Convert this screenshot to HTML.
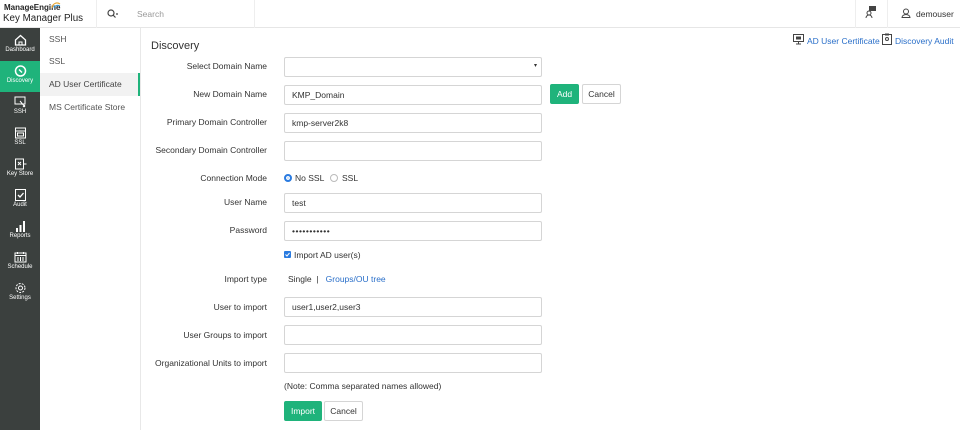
<!DOCTYPE html>
<html><head><meta charset="utf-8"><style>
*{margin:0;padding:0;box-sizing:border-box}
body{width:960px;height:430px;overflow:hidden;background:#fff;font-family:"Liberation Sans",sans-serif;font-size:8.5px;color:#333;position:relative}
.a{position:absolute;white-space:nowrap}
.hdr{position:absolute;left:0;top:0;width:960px;height:28px;border-bottom:1px solid #e6e6e6;background:#fff}
.side{position:absolute;left:0;top:28px;width:40px;height:402px;background:#3b403e}
.si{position:absolute;left:0;width:40px;height:31px;color:#fff;font-size:6px;text-align:center}
.si svg{display:block;margin:4px auto 1px}
.sub{position:absolute;left:40px;top:28px;width:101px;height:402px;background:#fff;border-right:1px solid #e8e8e8}
.sub div{position:absolute;left:0;width:100px;height:23px;line-height:23px;padding-left:9px;font-size:8.5px;color:#555}
.lbl{position:absolute;width:200px;left:67px;text-align:right;font-size:8.5px;color:#333}
.in{position:absolute;left:284px;width:258px;height:20px;border:1px solid #d5d5d5;border-radius:2px;padding-left:7px;line-height:18px;font-size:8.5px;color:#333}
.btn{position:absolute;height:20px;border-radius:2px;font-size:8.5px;line-height:18px;text-align:center}
.g{background:#1fb37b;color:#fff;border:1px solid #1fb37b}
.w{background:#fff;color:#333;border:1px solid #d5d5d5}
a{color:#2a6fc9}
</style></head><body>
<div class="hdr">
 <div class="a" style="left:4px;top:3px;font-size:8px;font-weight:bold;color:#222">ManageEngine</div>
 <svg class="a" style="left:51px;top:1px" width="10" height="8"><path d="M1 7 A5 5 0 0 1 9 3" stroke="#e8a32a" fill="none" stroke-width="1"/><path d="M3 7 A4 4 0 0 1 9 5" stroke="#3aa0dd" fill="none" stroke-width="1"/></svg>
 <div class="a" style="left:3px;top:13px;font-size:9.8px;color:#222">Key Manager Plus</div>
 <div class="a" style="left:96px;top:0;width:1px;height:28px;background:#eee"></div>
 <svg class="a" style="left:107px;top:9px" width="12" height="10"><circle cx="4" cy="4" r="3" stroke="#444" fill="none" stroke-width="1.2"/><path d="M6 6l2.5 2.5M9 5h2" stroke="#444" stroke-width="1.2"/></svg>
 <div class="a" style="left:137px;top:9px;color:#999;font-size:8.5px">Search</div>
 <div class="a" style="left:254px;top:0;width:1px;height:28px;background:#eee"></div>
 <div class="a" style="left:855px;top:0;width:1px;height:28px;background:#eee"></div>
 <div class="a" style="left:887px;top:0;width:1px;height:28px;background:#eee"></div>
 <svg class="a" style="left:865px;top:6px" width="12" height="13"><rect x="4" y="0" width="7" height="5" fill="#444"/><circle cx="4" cy="7" r="2" stroke="#444" fill="none"/><path d="M1 12 a3 3 0 0 1 6 0" stroke="#444" fill="none"/></svg>
 <svg class="a" style="left:901px;top:8px" width="10" height="10"><circle cx="5" cy="3.5" r="2.5" stroke="#444" fill="none"/><path d="M1 9.5 a4 3 0 0 1 8 0z" stroke="#444" fill="none"/></svg>
 <div class="a" style="left:916px;top:9px;color:#333">demouser</div>
</div>
<div class="side">
 <div class="si" style="top:2px"><svg width="13" height="12"><path d="M1.5 6L6.5 1.5L11.5 6V11H1.5Z" stroke="#fff" fill="none" stroke-width="1.3"/><path d="M5 11V8h3v3" stroke="#fff" fill="none"/></svg>Dashboard</div>
 <div class="si" style="top:33px;background:#1fb37b;height:31px"><svg width="13" height="12"><circle cx="6.5" cy="6" r="5" stroke="#fff" fill="none" stroke-width="1.5"/><path d="M5 4.5l3 3" stroke="#fff" stroke-width="1.4"/></svg>Discovery</div>
 <div class="si" style="top:64px"><svg width="13" height="12"><rect x="1" y="1" width="10" height="7" stroke="#fff" fill="none"/><path d="M6 5l5 6M9 11l2-2" stroke="#fff"/></svg>SSH</div>
 <div class="si" style="top:95px"><svg width="13" height="12"><rect x="1.5" y="1" width="10" height="10" stroke="#fff" fill="none"/><path d="M1.5 4h10M3.5 6h6v3h-6z" stroke="#fff" fill="none"/></svg>SSL</div>
 <div class="si" style="top:126px"><svg width="13" height="12"><rect x="1.5" y="1" width="8" height="10" stroke="#fff" fill="none"/><path d="M4 4l3 3M7 4l-3 3M9.5 6h3" stroke="#fff"/></svg>Key Store</div>
 <div class="si" style="top:157px"><svg width="13" height="12"><rect x="1.5" y="0.5" width="10" height="11" stroke="#fff" fill="none"/><path d="M4 6l2 2l3.5-4" stroke="#fff" fill="none" stroke-width="1.3"/></svg>Audit</div>
 <div class="si" style="top:188px"><svg width="13" height="12"><rect x="2" y="8" width="2" height="4" fill="#fff"/><rect x="5.5" y="5" width="2" height="7" fill="#fff"/><rect x="9" y="1" width="2" height="11" fill="#fff"/></svg>Reports</div>
 <div class="si" style="top:219px"><svg width="13" height="12"><rect x="1" y="2" width="11" height="9" stroke="#fff" fill="none"/><path d="M1 4.5h11M4 6v4M6.5 6v4M9 6v4M3.5 1v2M9.5 1v2" stroke="#fff"/></svg>Schedule</div>
 <div class="si" style="top:250px"><svg width="13" height="12"><circle cx="6.5" cy="6" r="2" stroke="#fff" fill="none"/><circle cx="6.5" cy="6" r="4.5" stroke="#fff" fill="none" stroke-dasharray="2 1.2"/></svg>Settings</div>
</div>
<div class="sub">
 <div style="top:0">SSH</div>
 <div style="top:22px">SSL</div>
 <div style="top:45px;background:#f2f2f2;border-right:2px solid #1fb37b;color:#444">AD User Certificate</div>
 <div style="top:68px">MS Certificate Store</div>
</div>
<div class="a" style="left:151px;top:40px;font-size:11px;color:#333">Discovery</div>
<svg class="a" style="left:793px;top:34px" width="11" height="11"><rect x="0.5" y="0.5" width="10" height="7" stroke="#444" fill="none"/><rect x="3" y="2.5" width="5" height="3" fill="#444"/><path d="M3 10h5M5.5 8v2" stroke="#444"/></svg>
<div class="a" style="left:807px;top:36px;color:#2a6fc9">AD User Certificate</div>
<svg class="a" style="left:882px;top:33px" width="10" height="12"><rect x="0.5" y="1.5" width="9" height="10" stroke="#444" fill="none"/><rect x="3" y="0.5" width="4" height="2" fill="#444"/><circle cx="5" cy="6" r="1.5" stroke="#444" fill="none"/></svg>
<div class="a" style="left:895px;top:36px;color:#2a6fc9">Discovery Audit</div>

<div class="lbl" style="top:61px">Select Domain Name</div>
<div class="in" style="top:57px"></div>
<div class="a" style="left:534px;top:62px;font-size:6px">▾</div>
<div class="lbl" style="top:89px">New Domain Name</div>
<div class="in" style="top:85px">KMP_Domain</div>
<div class="btn g" style="left:550px;top:84px;width:29px">Add</div>
<div class="btn w" style="left:582px;top:84px;width:39px">Cancel</div>
<div class="lbl" style="top:117px">Primary Domain Controller</div>
<div class="in" style="top:113px">kmp-server2k8</div>
<div class="lbl" style="top:145px">Secondary Domain Controller</div>
<div class="in" style="top:141px"></div>
<div class="lbl" style="top:173px">Connection Mode</div>
<div class="a" style="left:284px;top:174px;width:8px;height:8px;border-radius:50%;background:#2a7be0;border:2px solid #2a7be0;box-shadow:inset 0 0 0 1.5px #fff"></div>
<div class="a" style="left:295px;top:173px">No SSL</div>
<div class="a" style="left:330px;top:174px;width:8px;height:8px;border-radius:50%;border:1px solid #bbb"></div>
<div class="a" style="left:342px;top:173px">SSL</div>
<div class="lbl" style="top:197px">User Name</div>
<div class="in" style="top:193px">test</div>
<div class="lbl" style="top:225px">Password</div>
<div class="in" style="top:221px;letter-spacing:0.5px">•••••••••••</div>
<svg class="a" style="left:284px;top:251px" width="7" height="7"><rect width="7" height="7" rx="1" fill="#2a7be0"/><path d="M1.5 3.5l1.5 1.5l2.5-3" stroke="#fff" fill="none" stroke-width="1"/></svg>
<div class="a" style="left:294px;top:250px">Import AD user(s)</div>
<div class="lbl" style="top:274px">Import type</div>
<div class="a" style="left:288px;top:274px">Single &nbsp;| &nbsp; <a>Groups/OU tree</a></div>
<div class="lbl" style="top:302px">User to import</div>
<div class="in" style="top:297px">user1,user2,user3</div>
<div class="lbl" style="top:330px">User Groups to import</div>
<div class="in" style="top:325px"></div>
<div class="lbl" style="top:358px">Organizational Units to import</div>
<div class="in" style="top:353px"></div>
<div class="a" style="left:284px;top:381px">(Note: Comma separated names allowed)</div>
<div class="btn g" style="left:284px;top:401px;width:38px">Import</div>
<div class="btn w" style="left:324px;top:401px;width:39px">Cancel</div>
</body></html>
